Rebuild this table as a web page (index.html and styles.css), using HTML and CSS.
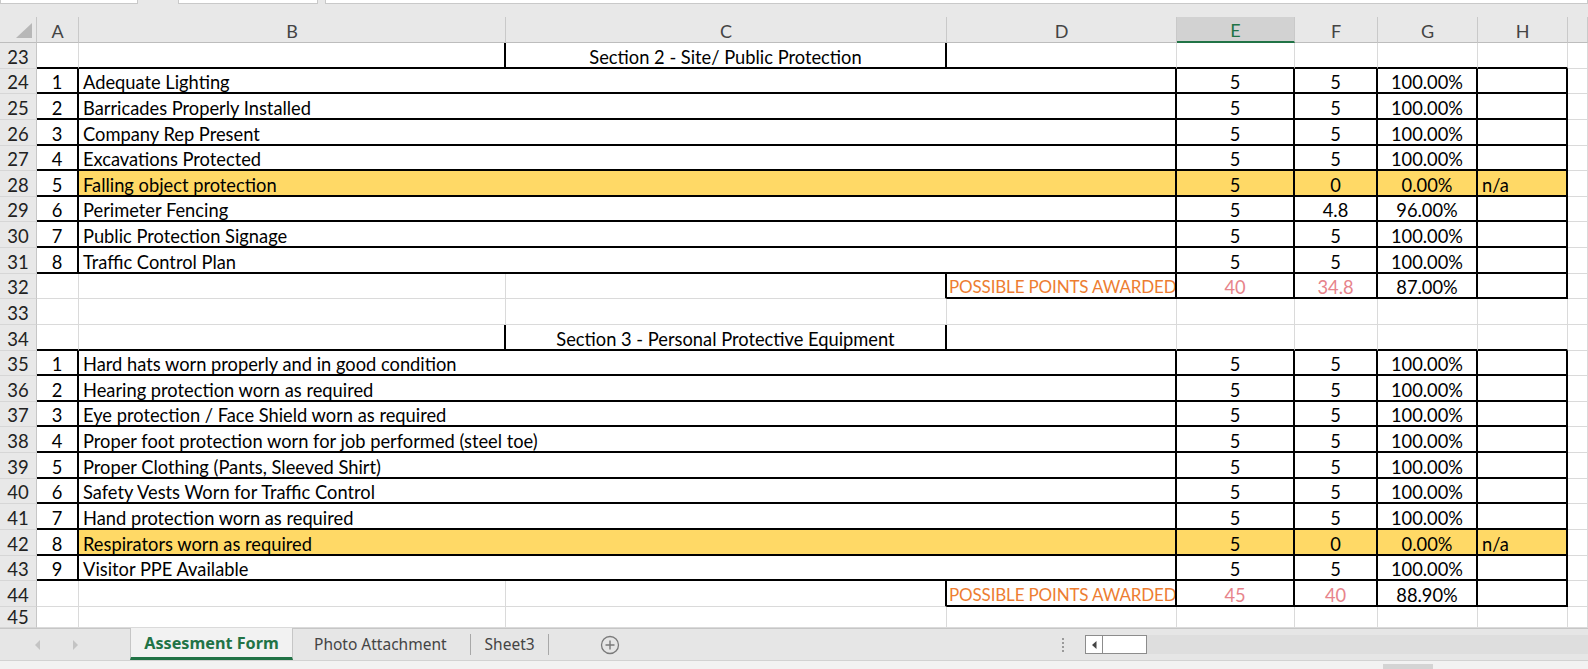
FILE: index.html
```html
<!DOCTYPE html>
<html>
<head>
<meta charset="utf-8">
<link rel="stylesheet" href="styles.css">
</head>
<body>
<div class="top">
  <div class="fbox n1"></div>
  <div class="fbox n2"></div>
  <div class="fbox n3"></div>
</div>
<div class="sheet">
  <div class="row hdr">
    <div class="corner"><span class="tri"></span></div>
    <div class="ch">A</div><div class="ch">B</div><div class="ch">C</div><div class="ch">D</div>
    <div class="ch sel">E</div><div class="ch">F</div><div class="ch">G</div><div class="ch">H</div><div class="ch"></div>
  </div>

  <div class="row"><div class="rh">23</div><div class="c bb"></div><div class="c bb br"></div><div class="c ctr bb br">Section 2 - Site/ Public Protection</div><div class="c bb"></div><div class="c bb"></div><div class="c bb"></div><div class="c bb"></div><div class="c bb"></div><div class="c"></div></div>

  <div class="row"><div class="rh">24</div><div class="c ctr bb br">1</div><div class="c span3 bb br">Adequate Lighting</div><div class="c ctr bb br">5</div><div class="c ctr bb br">5</div><div class="c ctr bb br">100.00%</div><div class="c bb br"></div><div class="c"></div></div>
  <div class="row"><div class="rh">25</div><div class="c ctr bb br">2</div><div class="c span3 bb br">Barricades Properly Installed</div><div class="c ctr bb br">5</div><div class="c ctr bb br">5</div><div class="c ctr bb br">100.00%</div><div class="c bb br"></div><div class="c"></div></div>
  <div class="row"><div class="rh">26</div><div class="c ctr bb br">3</div><div class="c span3 bb br">Company Rep Present</div><div class="c ctr bb br">5</div><div class="c ctr bb br">5</div><div class="c ctr bb br">100.00%</div><div class="c bb br"></div><div class="c"></div></div>
  <div class="row"><div class="rh">27</div><div class="c ctr bb br">4</div><div class="c span3 bb br">Excavations Protected</div><div class="c ctr bb br">5</div><div class="c ctr bb br">5</div><div class="c ctr bb br">100.00%</div><div class="c bb br"></div><div class="c"></div></div>
  <div class="row"><div class="rh">28</div><div class="c ctr bb br">5</div><div class="c span3 bb br yel">Falling object protection</div><div class="c ctr bb br yel">5</div><div class="c ctr bb br yel">0</div><div class="c ctr bb br yel">0.00%</div><div class="c bb br yel">n/a</div><div class="c"></div></div>
  <div class="row"><div class="rh">29</div><div class="c ctr bb br">6</div><div class="c span3 bb br">Perimeter Fencing</div><div class="c ctr bb br">5</div><div class="c ctr bb br">4.8</div><div class="c ctr bb br">96.00%</div><div class="c bb br"></div><div class="c"></div></div>
  <div class="row"><div class="rh">30</div><div class="c ctr bb br">7</div><div class="c span3 bb br">Public Protection Signage</div><div class="c ctr bb br">5</div><div class="c ctr bb br">5</div><div class="c ctr bb br">100.00%</div><div class="c bb br"></div><div class="c"></div></div>
  <div class="row"><div class="rh">31</div><div class="c ctr bb br">8</div><div class="c span3 bb br">Traffic Control Plan</div><div class="c ctr bb br">5</div><div class="c ctr bb br">5</div><div class="c ctr bb br">100.00%</div><div class="c bb br"></div><div class="c"></div></div>

  <div class="row"><div class="rh">32</div><div class="c"></div><div class="c"></div><div class="c br"></div><div class="c bb br org">POSSIBLE POINTS AWARDED</div><div class="c ctr bb br pink">40</div><div class="c ctr bb br pink">34.8</div><div class="c ctr bb br">87.00%</div><div class="c bb br"></div><div class="c"></div></div>
  <div class="row"><div class="rh">33</div><div class="c"></div><div class="c"></div><div class="c"></div><div class="c"></div><div class="c"></div><div class="c"></div><div class="c"></div><div class="c"></div><div class="c"></div></div>

  <div class="row"><div class="rh">34</div><div class="c bb"></div><div class="c bb br"></div><div class="c ctr bb br">Section 3 - Personal Protective Equipment</div><div class="c bb"></div><div class="c bb"></div><div class="c bb"></div><div class="c bb"></div><div class="c bb"></div><div class="c"></div></div>

  <div class="row"><div class="rh">35</div><div class="c ctr bb br">1</div><div class="c span3 bb br">Hard hats worn properly and in good condition</div><div class="c ctr bb br">5</div><div class="c ctr bb br">5</div><div class="c ctr bb br">100.00%</div><div class="c bb br"></div><div class="c"></div></div>
  <div class="row"><div class="rh">36</div><div class="c ctr bb br">2</div><div class="c span3 bb br">Hearing protection worn as required</div><div class="c ctr bb br">5</div><div class="c ctr bb br">5</div><div class="c ctr bb br">100.00%</div><div class="c bb br"></div><div class="c"></div></div>
  <div class="row"><div class="rh">37</div><div class="c ctr bb br">3</div><div class="c span3 bb br">Eye protection / Face Shield worn as required</div><div class="c ctr bb br">5</div><div class="c ctr bb br">5</div><div class="c ctr bb br">100.00%</div><div class="c bb br"></div><div class="c"></div></div>
  <div class="row"><div class="rh">38</div><div class="c ctr bb br">4</div><div class="c span3 bb br">Proper foot protection worn for job performed (steel toe)</div><div class="c ctr bb br">5</div><div class="c ctr bb br">5</div><div class="c ctr bb br">100.00%</div><div class="c bb br"></div><div class="c"></div></div>
  <div class="row"><div class="rh">39</div><div class="c ctr bb br">5</div><div class="c span3 bb br">Proper Clothing (Pants, Sleeved Shirt)</div><div class="c ctr bb br">5</div><div class="c ctr bb br">5</div><div class="c ctr bb br">100.00%</div><div class="c bb br"></div><div class="c"></div></div>
  <div class="row"><div class="rh">40</div><div class="c ctr bb br">6</div><div class="c span3 bb br">Safety Vests Worn for Traffic Control</div><div class="c ctr bb br">5</div><div class="c ctr bb br">5</div><div class="c ctr bb br">100.00%</div><div class="c bb br"></div><div class="c"></div></div>
  <div class="row"><div class="rh">41</div><div class="c ctr bb br">7</div><div class="c span3 bb br">Hand protection worn as required</div><div class="c ctr bb br">5</div><div class="c ctr bb br">5</div><div class="c ctr bb br">100.00%</div><div class="c bb br"></div><div class="c"></div></div>
  <div class="row"><div class="rh">42</div><div class="c ctr bb br">8</div><div class="c span3 bb br yel">Respirators worn as required</div><div class="c ctr bb br yel">5</div><div class="c ctr bb br yel">0</div><div class="c ctr bb br yel">0.00%</div><div class="c bb br yel">n/a</div><div class="c"></div></div>
  <div class="row"><div class="rh">43</div><div class="c ctr bb br">9</div><div class="c span3 bb br">Visitor PPE Available</div><div class="c ctr bb br">5</div><div class="c ctr bb br">5</div><div class="c ctr bb br">100.00%</div><div class="c bb br"></div><div class="c"></div></div>

  <div class="row"><div class="rh">44</div><div class="c"></div><div class="c"></div><div class="c br"></div><div class="c bb br org">POSSIBLE POINTS AWARDED</div><div class="c ctr bb br pink">45</div><div class="c ctr bb br pink">40</div><div class="c ctr bb br">88.90%</div><div class="c bb br"></div><div class="c"></div></div>
  <div class="row last"><div class="rh">45</div><div class="c"></div><div class="c"></div><div class="c"></div><div class="c"></div><div class="c"></div><div class="c"></div><div class="c"></div><div class="c"></div><div class="c"></div></div>
</div>

<div class="tabs">
  <div class="sheettabs">
    <div class="nav">
      <svg class="arr" width="6" height="10" viewBox="0 0 6 10"><path d="M5 0 L0 5 L5 10 Z" fill="#c4c4c4"/></svg>
      <svg class="arr" width="6" height="10" viewBox="0 0 6 10"><path d="M1 0 L6 5 L1 10 Z" fill="#c4c4c4"/></svg>
    </div>
    <div class="tab active">Assesment Form</div>
    <div class="tab">Photo Attachment</div>
    <div class="tab last">Sheet3</div>
    <div class="add">
      <svg width="20" height="20" viewBox="0 0 20 20"><circle cx="10" cy="10" r="8.5" fill="none" stroke="#7a7a7a" stroke-width="1.3"/><path d="M10 5.5 V14.5 M5.5 10 H14.5" stroke="#7a7a7a" stroke-width="1.4"/></svg>
    </div>
  </div>
  <div class="split"><span></span><span></span><span></span><span></span></div>
  <div class="hscroll">
    <div class="sbtn"><svg width="5" height="8" viewBox="0 0 5 8"><path d="M4.5 0 L0 4 L4.5 8 Z" fill="#444"/></svg></div>
    <div class="thumb"></div>
    <div class="track"></div>
  </div>
</div>
<div class="status"><div class="sbox"></div></div>
</body>
</html>
```
FILE: styles.css
```css
* { box-sizing: border-box; margin: 0; padding: 0; }
body {
  width: 1588px;
  height: 669px;
  overflow: hidden;
  background: #fff;
  font-family: Lato, "Liberation Sans", sans-serif;
}
.top {
  height: 17px;
  background: #e8e8e8;
  display: flex;
  align-items: flex-start;
}
.fbox { height: 4px; background: #fff; border: 1px solid #c9c9c9; border-top: none; }
.fbox.n1 { width: 138px; }
.fbox.n2 { width: 140px; margin-left: 40px; }
.fbox.n3 { flex: 1; margin-left: 7px; }

.sheet { height: 611px; overflow: hidden; }
.row {
  display: grid;
  grid-template-columns: 37px 42px 427px 441px 230px 118px 83px 100px 90px 20px;
  height: 25.64px;
}
.row.hdr { height: 26px; }
.row.last { height: 21px; }
.row.last .rh { align-items: center; padding-bottom: 0; }
.corner {
  background: #e8e8e8;
  border-right: 1px solid #c6c6c6;
  border-bottom: 1px solid #bdbdbd;
  display: flex;
  align-items: flex-end;
  justify-content: flex-end;
  padding: 0 4px 4px 0;
}
.tri {
  width: 0; height: 0;
  border-left: 16px solid transparent;
  border-bottom: 15px solid #b7b7b7;
}
.ch {
  background: #e8e8e8;
  border-right: 1px solid #c9c9c9;
  border-bottom: 1px solid #bdbdbd;
  color: #444;
  font-size: 18px;
  display: flex;
  align-items: center;
  justify-content: center;
  padding-top: 2px;
}
.ch.sel {
  background: #d2d2d2;
  color: #217346;
  border-bottom: 2px solid #217346;
}
.rh {
  background: #e8e8e8;
  border-right: 1px solid #c6c6c6;
  border-bottom: 1px solid #d6d6d6;
  color: #222;
  font-size: 18.5px;
  display: flex;
  align-items: flex-end;
  justify-content: center;
  line-height: 20px;
  padding-bottom: 1px;
}
.c {
  border-right: 1px solid #dadada;
  border-bottom: 1px solid #dadada;
  display: flex;
  align-items: flex-end;
  padding: 0 4px 0;
  font-size: 18.3px;
  line-height: 20px;
  color: #000;
  white-space: nowrap;
  overflow: hidden;
}
.c.span3 { grid-column: span 3; }
.c.ctr { justify-content: center; }
.c.br { border-right: 2px solid #000; }
.c.bb { border-bottom: 2px solid #000; }
.c.yel { background: #ffd966; }
.c.org { color: #ed7d31; padding-left: 2px; padding-right: 0; font-size: 17px; letter-spacing: -0.15px; }
.c.pink { color: #e7848b; }

.tabs {
  height: 32px;
  background: #e6e6e6;
  border-top: 1px solid #c6c6c6;
  display: flex;
  align-items: stretch;
}
.sheettabs { width: 1055px; display: flex; align-items: stretch; }
.nav {
  width: 130px;
  display: flex;
  align-items: center;
  padding-left: 35px;
  gap: 31px;
}
.tab {
  display: flex;
  align-items: center;
  padding: 0 23px 2px 21px;
  font-family: "Noto Sans", "Open Sans", sans-serif;
  font-size: 15.5px;
  color: #444;
  position: relative;
}
.tab + .tab::before {
  content: "";
  position: absolute;
  left: 0; top: 5px; bottom: 5px;
  width: 1px;
  background: #a8a8a8;
}
.tab.active + .tab::before { display: none; }
.tab.last { padding: 0 14px 2px 15px; }
.tab.last::after {
  content: "";
  position: absolute;
  right: 0; top: 5px; bottom: 5px;
  width: 1px;
  background: #a8a8a8;
}
.tab.active {
  width: 163px;
  justify-content: center;
  padding: 0 0 0 0;
  margin-top: -1px;
  background: #f2f2f2;
  border-left: 1px solid #c6c6c6;
  border-right: 1px solid #c6c6c6;
  border-bottom: 3px solid #217346;
  color: #217346;
  font-size: 16.2px;
  font-weight: 700;
}
.add { display: flex; align-items: center; padding-left: 51px; }
.split {
  width: 20px;
  display: flex;
  flex-direction: column;
  align-items: center;
  justify-content: center;
  gap: 2px;
  margin-left: -2px;
}
.split span { width: 2px; height: 2px; background: #9a9a9a; }
.hscroll {
  flex: 1;
  display: flex;
  align-items: center;
  padding-left: 12px;
}
.sbtn {
  width: 18px; height: 19px;
  background: #fff;
  border: 1px solid #8c8c8c;
  display: flex; align-items: center; justify-content: center;
}
.thumb { width: 44px; height: 19px; background: #fff; border: 1px solid #8c8c8c; border-left: none; }
.track { flex: 1; height: 19px; background: #dedede; }
.status {
  height: 9px;
  background: #f2f2f2;
  border-top: 1px solid #d2d2d2;
  position: relative;
}
.sbox { position: absolute; left: 1383px; top: 3px; width: 50px; height: 5px; background: #d4d4d4; }
```
